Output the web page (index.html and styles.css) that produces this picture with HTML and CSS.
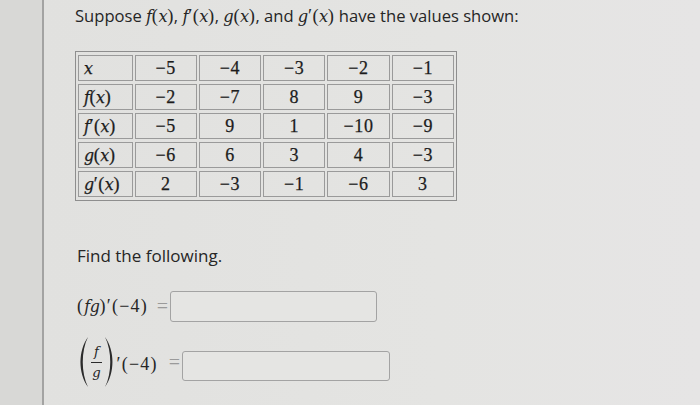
FILE: index.html
```html
<!DOCTYPE html>
<html>
<head>
<meta charset="utf-8">
<link rel="stylesheet" href="styles.css">
</head>
<body>
<div class="screen">
  <div class="side"></div>
  <div class="divider"></div>
  <main class="content">
    <p class="title">Suppose <span class="m"><i>f</i>(<i>x</i>)</span>, <span class="m"><i>f</i>′(<i>x</i>)</span>, <span class="m"><i>g</i>(<i>x</i>)</span>, and <span class="m"><i>g</i>′(<i>x</i>)</span> have the values shown:</p>
    <table class="values">
      <tr><td class="head"><i>x</i></td><td>−5</td><td>−4</td><td>−3</td><td>−2</td><td>−1</td></tr>
      <tr><td class="head"><i>f</i>(<i>x</i>)</td><td>−2</td><td>−7</td><td>8</td><td>9</td><td>−3</td></tr>
      <tr><td class="head"><i>f</i>′(<i>x</i>)</td><td>−5</td><td>9</td><td>1</td><td>−10</td><td>−9</td></tr>
      <tr><td class="head"><i>g</i>(<i>x</i>)</td><td>−6</td><td>6</td><td>3</td><td>4</td><td>−3</td></tr>
      <tr><td class="head"><i>g</i>′(<i>x</i>)</td><td>2</td><td>−3</td><td>−1</td><td>−6</td><td>3</td></tr>
    </table>
    <p class="find">Find the following.</p>
    <div class="eq eq1">
      <span class="label">(<i>f</i><i>g</i>)′(−4)</span>
      <span class="equals">=</span>
      <span class="answer a1"></span>
    </div>
    <div class="eq eq2">
      <span class="label small">
        <svg class="paren" width="12" height="50" viewBox="0 0 12 50"><path d="M11 0 C1 14 1 36 11 50 C4 36 4 14 11 0 Z" fill="#2b2b2b"/></svg>
        <span class="frac"><span class="num"><i>f</i></span><span class="den"><i>g</i></span></span>
        <svg class="paren" width="12" height="50" viewBox="0 0 12 50"><path d="M1 0 C11 14 11 36 1 50 C8 36 8 14 1 0 Z" fill="#2b2b2b"/></svg>
        <span class="tail">′(−4)</span>
      </span>
      <span class="equals">=</span>
      <span class="answer a2"></span>
    </div>
  </main>
</div>
</body>
</html>
```

FILE: styles.css
```css
html, body {
  margin: 0;
  padding: 0;
}
body {
  width: 700px;
  height: 405px;
  overflow: hidden;
  background: #e3e3e1;
  color: #262626;
}
.screen {
  display: flex;
  height: 405px;
}
.side {
  width: 42px;
  background: #d8d8d6;
}
.divider {
  width: 2px;
  background: #a3a3a2;
}
.content {
  flex: 1;
  padding-left: 31px;
  background: linear-gradient(90deg, #e1e1df 0%, #e4e4e2 60%, #e6e5e5 100%);
}
i {
  font-family: "DejaVu Serif", serif;
  font-style: italic;
  font-size: 0.88em;
  letter-spacing: -0.3px;
}
.title {
  margin: 4px 0 0 0;
  font-family: "Open Sans", sans-serif;
  font-size: 16.6px;
  font-stretch: 93%;
  line-height: 24px;
  color: #262626;
  white-space: nowrap;
}
.m {
  font-family: "Liberation Serif", serif;
  font-size: 18.5px;
  letter-spacing: 0.4px;
}
.values {
  margin-top: 22px;
  border: 1px solid #8e8e8e;
  border-collapse: separate;
  border-spacing: 2px 3px;
  width: 382px;
  font-family: "Liberation Serif", serif;
  font-size: 18px;
  color: #1c1c1c;
  -webkit-text-stroke: 0.25px #1c1c1c;
}
.values td {
  border: 1px solid #9a9a9a;
  height: 24px;
  padding: 0;
  text-align: center;
  vertical-align: middle;
  width: 61px;
  letter-spacing: 0.6px;
}
.values td.head {
  width: 48px;
  text-align: left;
  padding-left: 5px;
  letter-spacing: 0.5px;
}
.find {
  margin: 43px 0 0 2px;
  font-family: "Open Sans", sans-serif;
  font-size: 17px;
  font-stretch: 93%;
  line-height: 24px;
  color: #262626;
}
.eq {
  display: flex;
  align-items: center;
  margin-left: 2px;
  font-family: "Liberation Serif", serif;
  color: #262626;
}
.eq1 {
  margin-top: 23px;
  height: 30px;
  font-size: 18px;
}
.eq1 .label {
  width: 78px;
  letter-spacing: 1.2px;
}
.eq2 {
  margin-top: 15px;
  height: 52px;
}
.label.small {
  display: flex;
  align-items: center;
  width: 90px;
}
.paren {
  display: block;
}
.frac {
  display: inline-flex;
  flex-direction: column;
  align-items: center;
  font-size: 15px;
  line-height: 17px;
  margin: 0 2px;
}
.frac .num {
  border-bottom: 1px solid #2b2b2b;
  padding: 0 3px 2px 3px;
}
.frac .den {
  padding-top: 1px;
}
.tail {
  font-size: 18px;
  margin-left: 1px;
  margin-top: 5px;
  letter-spacing: 1.2px;
}
.equals {
  color: #9a9a9a;
  font-size: 20px;
  width: 15px;
  text-align: center;
}
.answer {
  display: block;
  box-sizing: border-box;
  height: 31px;
  border: 1.5px solid #a3a3a3;
  border-radius: 3px;
  background: #e5e5e3;
}
.a1 {
  width: 207px;
}
.a2 {
  width: 208px;
  margin-top: 8px;
  height: 30px;
}
```
